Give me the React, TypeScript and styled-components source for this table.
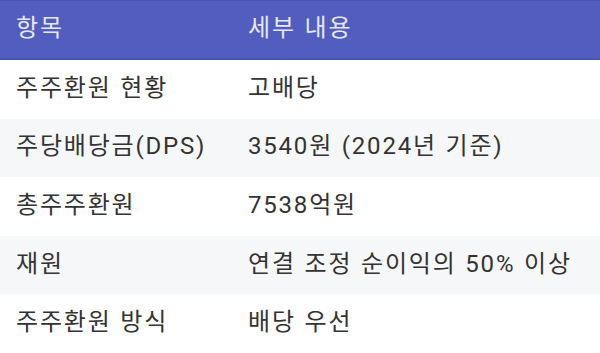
import React from "react";
import styled, { createGlobalStyle } from "styled-components";

const Global = createGlobalStyle`
  html, body { margin: 0; padding: 0; background: #fff; }
  body { font-family: Roboto, "Noto Sans CJK KR", sans-serif; }
`;

const Table = styled.div`
  width: 600px;
  height: 353px;
  display: flex;
  flex-direction: column;
  font-size: 24px;
  letter-spacing: 1.8px;
  word-spacing: 1px;
  line-height: 1.2;
`;

const Header = styled.div`
  height: 60px;
  flex: none;
  display: grid;
  grid-template-columns: 232px 1fr;
  align-items: center;
  background: #525ebf;
  color: #e6e8f6;
  border-top: 1px solid #4a55ae;
  border-bottom: 2px solid #4752ab;
  box-sizing: border-box;
`;

const Row = styled.div<{ $alt: boolean }>`
  flex: 1;
  display: grid;
  grid-template-columns: 232px 1fr;
  align-items: center;
  background: ${(p) => (p.$alt ? "#f6f7f9" : "#ffffff")};
  color: #333333;
`;

const Cell = styled.div`
  padding: 0 16px 2px 16px;
  white-space: nowrap;
`;

const rows: [string, string][] = [
  ["주주환원 현황", "고배당"],
  ["주당배당금(DPS)", "3540원 (2024년 기준)"],
  ["총주주환원", "7538억원"],
  ["재원", "연결 조정 순이익의 50% 이상"],
  ["주주환원 방식", "배당 우선"],
];

export default function App() {
  return (
    <>
      <Global />
      <Table>
        <Header>
          <Cell>항목</Cell>
          <Cell>세부 내용</Cell>
        </Header>
        {rows.map(([a, b], i) => (
          <Row key={a} $alt={i % 2 === 1}>
            <Cell>{a}</Cell>
            <Cell>{b}</Cell>
          </Row>
        ))}
      </Table>
    </>
  );
}
